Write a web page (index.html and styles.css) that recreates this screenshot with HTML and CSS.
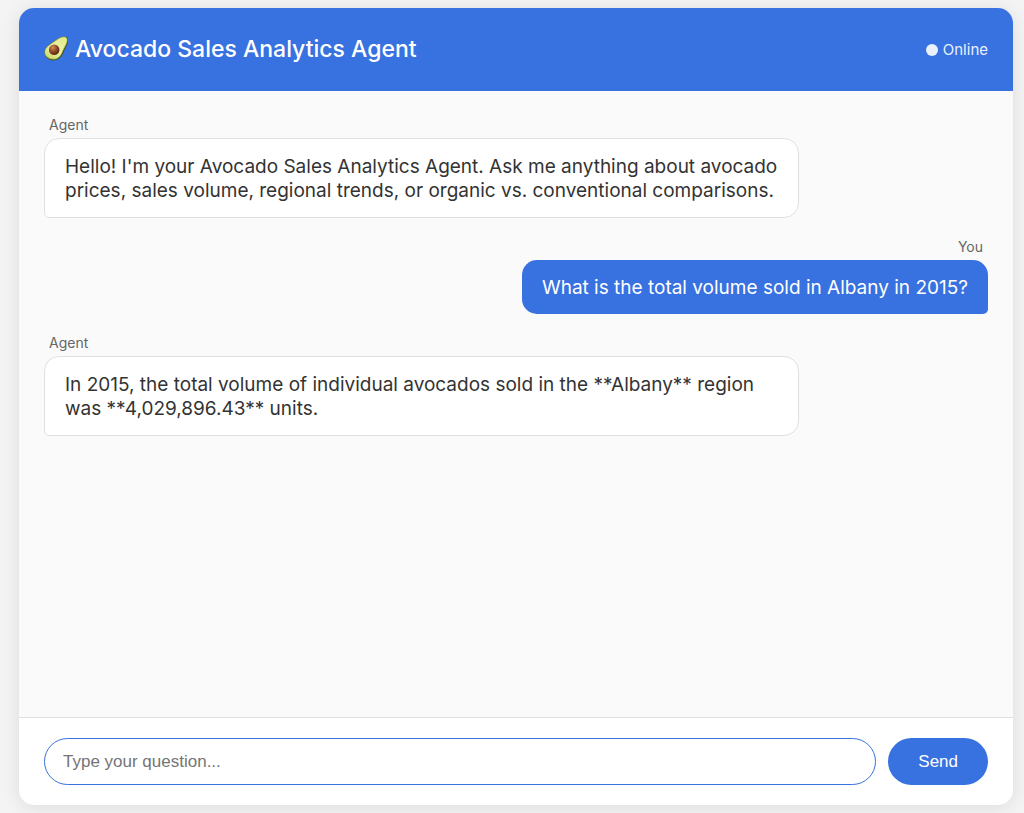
FILE: index.html
```html
<!DOCTYPE html>
<html lang="en">
<head>
  <meta charset="utf-8">
  <meta name="viewport" content="width=device-width, initial-scale=1">
  <title>Avocado Sales Analytics Agent</title>
  <link rel="stylesheet" href="styles.css">
</head>
<body>
  <main class="chat">
    <header class="chat-header">
      <h1 class="title">
        <svg class="avocado" viewBox="0 0 26 26" aria-hidden="true">
          <defs>
            <linearGradient id="flesh" x1="0.8" y1="0" x2="0.2" y2="1">
              <stop offset="0" stop-color="#e3e98a"/>
              <stop offset="0.55" stop-color="#eef2ac"/>
              <stop offset="1" stop-color="#cbd968"/>
            </linearGradient>
            <radialGradient id="pit" cx="0.38" cy="0.3" r="0.75">
              <stop offset="0" stop-color="#d39264"/>
              <stop offset="0.45" stop-color="#96502a"/>
              <stop offset="1" stop-color="#51220f"/>
            </radialGradient>
          </defs>
          <path fill="#43521f" d="M22.600 .8C25.600 1.400 25.500 5.600 24 9.200C22.500 12.700 21.400 14.400 20 18C18.200 22.400 14.600 25.500 9.200 25.400C4.400 25.200 .6 21.700 .6 17.200C.6 12.800 3.700 10.400 8 7.300C12.300 4.200 17.400 -.2 22.600 .8Z"/>
          <path fill="url(#flesh)" stroke="#b5c94e" stroke-width=".7" d="M22 1.200C24.800 1.800 24.300 5.500 22.700 8.800C21 12.200 20 13.800 18.600 17.400C16.900 21.500 13.800 24.200 9.200 24C4.700 23.700 1 20.900 1 16.900C1 12.800 4.200 10.500 8.400 7.600C12.700 4.700 17.400 .2 22 1.200Z"/>
          <circle cx="10.600" cy="14.300" r="5.500" fill="url(#pit)"/>
        </svg>
        Avocado Sales Analytics Agent
      </h1>
      <div class="status"><span class="status-dot"></span>Online</div>
    </header>

    <section class="messages" aria-label="Conversation">
      <article class="message">
        <div class="sender">Agent</div>
        <p class="bubble">Hello! I'm your Avocado Sales Analytics Agent. Ask me anything about avocado prices, sales volume, regional trends, or organic vs. conventional comparisons.</p>
      </article>
      <article class="message message-user">
        <div class="sender">You</div>
        <p class="bubble">What is the total volume sold in Albany in 2015?</p>
      </article>
      <article class="message">
        <div class="sender">Agent</div>
        <p class="bubble">In 2015, the total volume of individual avocados sold in the **Albany** region was **4,029,896.43** units.</p>
      </article>
    </section>

    <form class="composer">
      <input class="question" type="text" placeholder="Type your question..." aria-label="Your question">
      <button class="send" type="button">Send</button>
    </form>
  </main>
</body>
</html>
```

FILE: styles.css
```css
* {
  box-sizing: border-box;
}

body {
  margin: 0;
  padding: 8px 11px 8px 19px;
  min-height: 100vh;
  display: flex;
  background: #f4f4f4;
  color: #333;
  font-family: Inter, "Liberation Sans", sans-serif;
}

.chat {
  flex: 1;
  min-width: 0;
  display: flex;
  flex-direction: column;
  overflow: hidden;
  border-radius: 15px;
  background: #fff;
  box-shadow: 0 2px 20px rgba(0, 0, 0, 0.1);
}

.chat-header {
  display: flex;
  align-items: center;
  justify-content: space-between;
  padding: 26px 25px;
  background: #3871e0;
  color: #fff;
}

.title {
  display: flex;
  align-items: center;
  gap: 6px;
  margin: 0;
  font-size: 23px;
  font-weight: 500;
  line-height: 31px;
}

.avocado {
  width: 25px;
  height: 25px;
  margin-bottom: 3px;
}

.status {
  display: flex;
  align-items: center;
  gap: 5px;
  font-size: 15px;
  opacity: 0.9;
}

.status-dot {
  width: 12px;
  height: 12px;
  border-radius: 50%;
  background: #fff;
}

.messages {
  flex: 1;
  display: flex;
  flex-direction: column;
  gap: 20px;
  padding: 25px;
  background: #fafafa;
}

.message {
  display: flex;
  flex-direction: column;
  align-items: flex-start;
  gap: 4px;
}

.message-user {
  align-items: flex-end;
}

.sender {
  padding: 0 5px;
  color: #666;
  font-size: 14px;
  line-height: 18px;
}

.bubble {
  max-width: 80%;
  margin: 0;
  padding: 16px 20px 14px;
  border: 1px solid #e0e0e0;
  border-radius: 15px 15px 15px 5px;
  background: #fff;
  font-size: 19px;
  line-height: 24px;
}

.message-user .bubble {
  border: 0;
  border-radius: 15px 15px 5px 15px;
  background: #3871e0;
  color: #fff;
}

.composer {
  display: flex;
  gap: 12px;
  padding: 20px 25px;
  border-top: 1px solid #e0e0e0;
}

.question,
.send {
  height: 47px;
  border-radius: 24px;
  font-family: "Liberation Sans", Arial, sans-serif;
  font-size: 17px;
}

.question {
  flex: 1;
  min-width: 0;
  padding: 0 18px;
  border: 1px solid #3871e0;
  background: #fff;
  color: #333;
  outline: 0;
}

.question::placeholder {
  color: #757575;
}

.send {
  padding: 0 30px;
  border: 0;
  background: #3871e0;
  color: #fff;
  cursor: pointer;
}
```
